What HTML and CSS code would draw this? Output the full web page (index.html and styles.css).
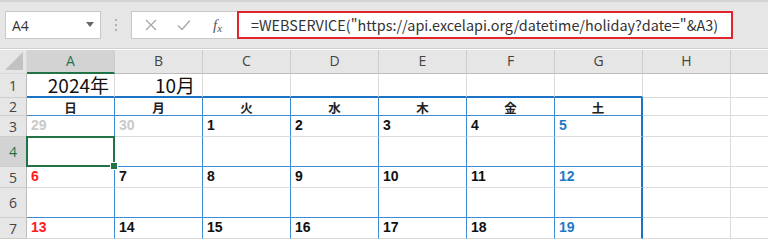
FILE: index.html
```html
<!DOCTYPE html>
<html lang="ja">
<head>
    <meta charset="UTF-8">
    <title>カレンダー - WEBSERVICE</title>
    <link rel="stylesheet" href="styles.css">
</head>
<body>
    <!-- Formula bar -->
    <div class="formula-bar">
        <div class="name-box">
            <span>A4</span>
            <svg class="caret" width="8" height="5" viewBox="0 0 8 5"><path d="M0 0H8L4 5Z" fill="#666"/></svg>
        </div>
        <div class="grip"><i></i><i></i><i></i></div>
        <div class="fx-buttons">
            <svg width="12" height="12" viewBox="0 0 12 12"><path d="M1 1L11 11M11 1L1 11" stroke="#a6a6a6" stroke-width="1.3" fill="none"/></svg>
            <svg width="14" height="12" viewBox="0 0 14 12"><path d="M1 6.5L5 10.5L13 1.5" stroke="#a6a6a6" stroke-width="1.3" fill="none"/></svg>
            <span class="fx">f<span class="fx-x">x</span></span>
        </div>
        <div class="formula">=WEBSERVICE("https://api.excelapi.org/datetime/holiday?date="&amp;A3)</div>
    </div>

    <!-- Sheet -->
    <div class="sheet">
        <!-- header row -->
        <div class="corner"><svg width="18" height="18" viewBox="0 0 18 18"><path d="M18 0V18H0Z" fill="#c2c2c2"/></svg></div>
        <div class="ch sel-col">A</div>
        <div class="ch">B</div>
        <div class="ch">C</div>
        <div class="ch">D</div>
        <div class="ch">E</div>
        <div class="ch">F</div>
        <div class="ch">G</div>
        <div class="ch">H</div>
        <div class="ch last"></div>

        <!-- row 1 -->
        <div class="rh">1</div>
        <div class="c title top-b pad-a">2024年</div>
        <div class="c title top-b pad-b">10月</div>
        <div class="c top-b"></div>
        <div class="c top-b"></div>
        <div class="c top-b"></div>
        <div class="c top-b"></div>
        <div class="c top-b"></div>
        <div class="c"></div>
        <div class="c last"></div>

        <!-- row 2 -->
        <div class="rh">2</div>
        <div class="c wd cal wk">日</div>
        <div class="c wd cal wk">月</div>
        <div class="c wd cal wk">火</div>
        <div class="c wd cal wk">水</div>
        <div class="c wd cal wk">木</div>
        <div class="c wd cal wk">金</div>
        <div class="c wd cal wk edge">土</div>
        <div class="c"></div>
        <div class="c last"></div>

        <!-- row 3 -->
        <div class="rh">3</div>
        <div class="c num cal gray">29</div>
        <div class="c num cal gray">30</div>
        <div class="c num cal">1</div>
        <div class="c num cal">2</div>
        <div class="c num cal">3</div>
        <div class="c num cal">4</div>
        <div class="c num cal edge blue">5</div>
        <div class="c"></div>
        <div class="c last"></div>

        <!-- row 4 -->
        <div class="rh sel-row">4</div>
        <div class="c cal wk active"></div>
        <div class="c cal wk"></div>
        <div class="c cal wk"></div>
        <div class="c cal wk"></div>
        <div class="c cal wk"></div>
        <div class="c cal wk"></div>
        <div class="c cal wk edge"></div>
        <div class="c"></div>
        <div class="c last"></div>

        <!-- row 5 -->
        <div class="rh">5</div>
        <div class="c num cal red">6</div>
        <div class="c num cal">7</div>
        <div class="c num cal">8</div>
        <div class="c num cal">9</div>
        <div class="c num cal">10</div>
        <div class="c num cal">11</div>
        <div class="c num cal edge blue">12</div>
        <div class="c"></div>
        <div class="c last"></div>

        <!-- row 6 -->
        <div class="rh">6</div>
        <div class="c cal wk"></div>
        <div class="c cal wk"></div>
        <div class="c cal wk"></div>
        <div class="c cal wk"></div>
        <div class="c cal wk"></div>
        <div class="c cal wk"></div>
        <div class="c cal wk edge"></div>
        <div class="c"></div>
        <div class="c last"></div>

        <!-- row 7 -->
        <div class="rh">7</div>
        <div class="c num cal red">13</div>
        <div class="c num cal">14</div>
        <div class="c num cal">15</div>
        <div class="c num cal">16</div>
        <div class="c num cal">17</div>
        <div class="c num cal">18</div>
        <div class="c num cal edge blue">19</div>
        <div class="c"></div>
        <div class="c last"></div>
    </div>
</body>
</html>
```

FILE: styles.css
```css
/* Global */
body {
    margin: 0;
    background: #fff;
    font-family: "Noto Sans CJK JP", "Noto Sans", sans-serif;
    color: #222;
    overflow: hidden;
}

/* Formula bar */
.formula-bar {
    height: 49px;
    box-sizing: border-box;
    background: #e6e6e6;
    border-top: 2px solid #d4d4d4;
    border-bottom: 1px solid #d0d0d0;
    display: flex;
    align-items: center;
    padding: 0 0 0 5px;
}
.name-box {
    width: 96px;
    height: 28px;
    box-sizing: border-box;
    background: #fff;
    border: 1px solid #c8c8c8;
    display: flex;
    align-items: center;
    justify-content: space-between;
    padding: 0 6px 0 6px;
    font-family: "Open Sans", sans-serif;
    font-size: 14px;
    color: #333;
}
.name-box .caret {
    margin-top: -2px;
}
.grip {
    width: 30px;
    display: flex;
    flex-direction: column;
    align-items: center;
    gap: 3px;
}
.grip i {
    width: 2px;
    height: 2px;
    background: #b0b0b0;
}
.fx-buttons {
    width: 106px;
    height: 28px;
    box-sizing: border-box;
    background: #fff;
    border: 1px solid #c8c8c8;
    border-right: none;
    display: flex;
    align-items: center;
    padding-left: 13px;
    gap: 20px;
}
.fx {
    font-family: "Liberation Serif", serif;
    font-style: italic;
    font-size: 15px;
    line-height: 16px;
    color: #555;
    margin-left: 2px;
}
.fx-x {
    font-size: 11px;
    position: relative;
    top: 2px;
}
.formula {
    width: 496px;
    height: 28px;
    box-sizing: border-box;
    background: #fff;
    border: 2px solid #e0262b;
    padding-left: 12px;
    line-height: 24px;
    font-size: 14.4px;
    color: #333;
    white-space: nowrap;
    overflow: hidden;
}

/* Sheet grid */
.sheet {
    display: grid;
    grid-template-columns: 27px repeat(8, 88px) 1fr;
    grid-template-rows: 24px 24px 18px 21px 30px 21px 30px 21px;
    margin-top: 1px;
}
.sheet > div {
    box-sizing: border-box;
    border-right: 1px solid #dadada;
    border-bottom: 1px solid #dadada;
}
.corner {
    background: #e6e6e6;
    display: flex;
    align-items: flex-end;
    justify-content: flex-end;
    padding: 0 3px 3px 0;
}
.ch {
    background: #e6e6e6;
    font-family: "Open Sans", sans-serif;
    font-size: 14px;
    color: #444;
    text-align: center;
    line-height: 22px;
    border-right-color: #cdcdcd !important;
    border-bottom-color: #bdbdbd !important;
}
.ch.sel-col {
    background: #d3d3d3;
    color: #217346;
    border-bottom: 2px solid #217346 !important;
}
.rh {
    background: #e6e6e6;
    font-family: "Open Sans", sans-serif;
    font-size: 14px;
    color: #444;
    display: flex;
    align-items: center;
    justify-content: center;
    border-right-color: #bdbdbd !important;
    border-bottom-color: #cdcdcd !important;
}
.rh.sel-row {
    background: #d3d3d3;
    color: #217346;
}
.last {
    border-right: none !important;
}

/* Cells */
.c {
    position: relative;
}
.title {
    font-size: 19px;
    text-align: right;
    line-height: 22px;
    color: #111;
}
.pad-a {
    padding-right: 5px;
}
.pad-b {
    padding-right: 7px;
}
.top-b {
    border-bottom: 2px solid #1a73c6 !important;
}
.cal {
    border-right: 1px solid #3d8bd3 !important;
}
.cal.edge {
    border-right: 2px solid #1a73c6 !important;
}
.wk {
    border-bottom: 1px solid #3d8bd3 !important;
}
.wd {
    font-size: 12.5px;
    font-weight: bold;
    text-align: center;
    line-height: 17px;
    padding-top: 1px;
    color: #222;
}
.num {
    font-family: "Liberation Sans", Arial, sans-serif;
    font-size: 14px;
    font-weight: bold;
    line-height: 18px;
    padding-left: 4px;
    color: #111;
}
.gray {
    color: #c9c9c9;
}
.red {
    color: #ff1a1a;
}
.blue {
    color: #1f78c8;
}

/* Active cell */
.active::after {
    content: "";
    position: absolute;
    left: -1px;
    top: -1px;
    right: -1px;
    bottom: -1px;
    border: 2px solid #217346;
}
.active::before {
    content: "";
    position: absolute;
    right: -4px;
    bottom: -4px;
    width: 6px;
    height: 6px;
    background: #217346;
    border: 1px solid #fff;
    z-index: 2;
}
```
